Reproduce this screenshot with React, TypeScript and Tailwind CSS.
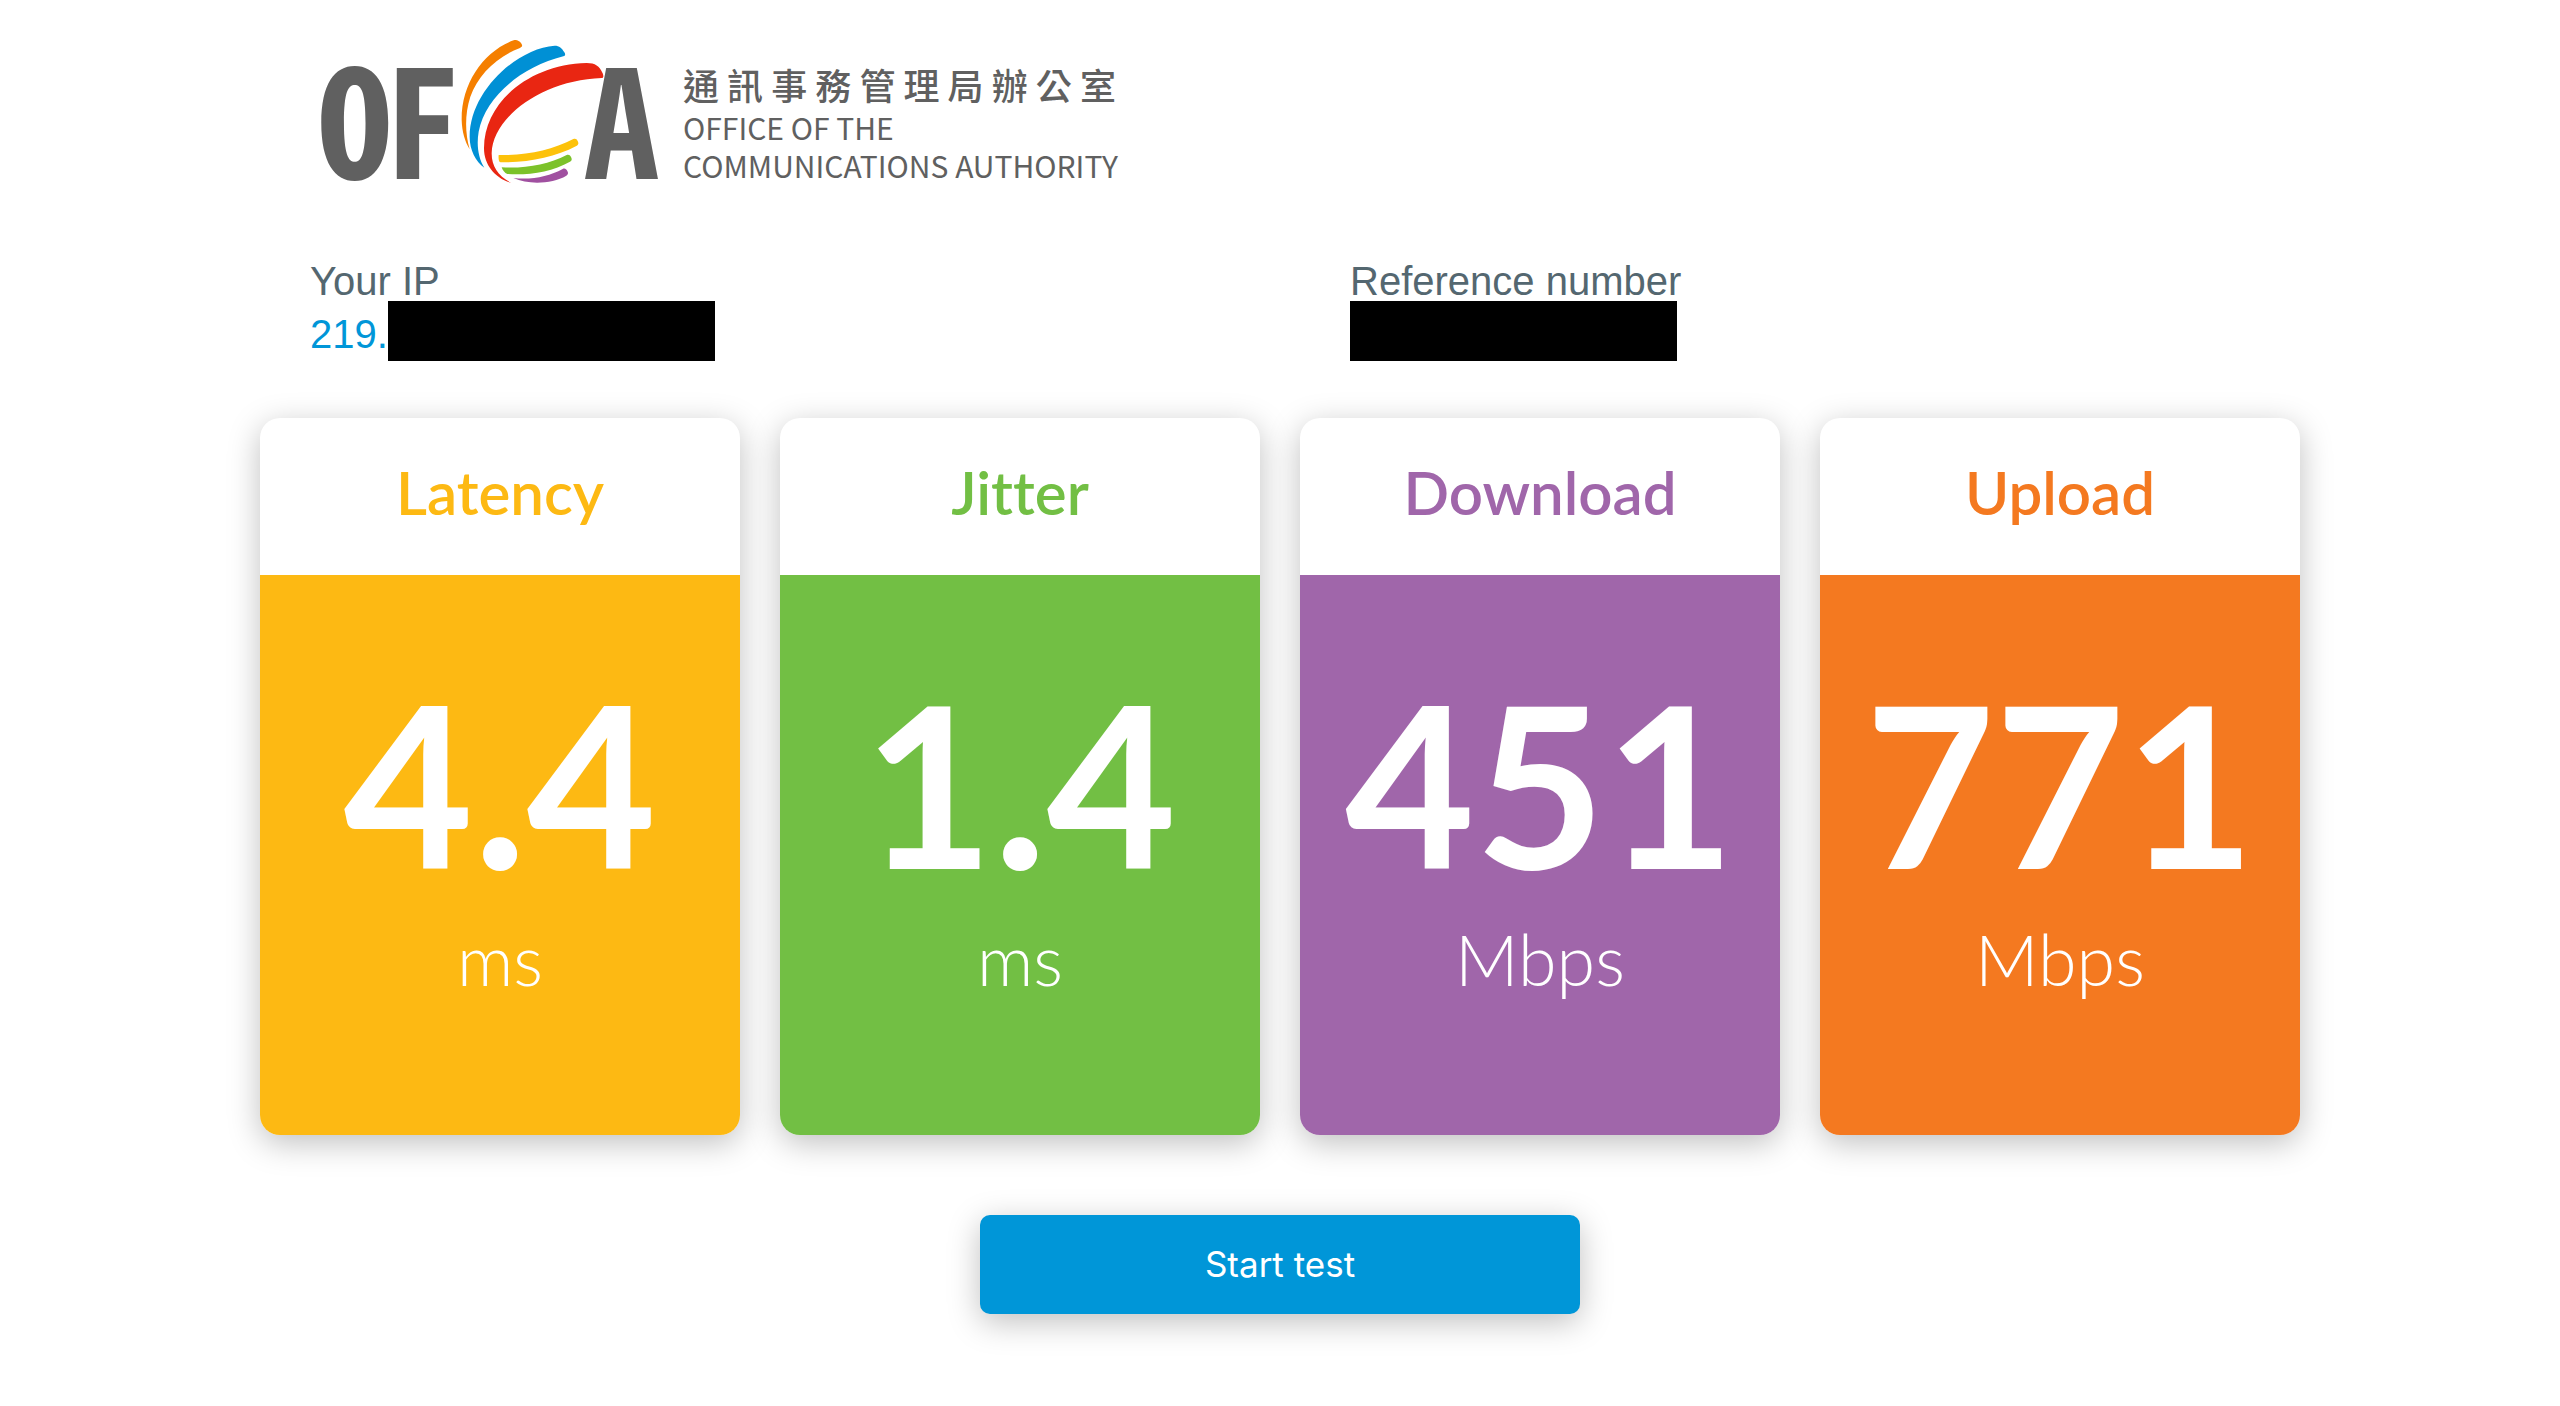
const results = [
  { title: "Latency", value: "4.4", unit: "ms", text: "text-[#fdb913]", bg: "bg-[#fdb913]" },
  { title: "Jitter", value: "1.4", unit: "ms", text: "text-[#72bf44]", bg: "bg-[#72bf44]" },
  { title: "Download", value: "451", unit: "Mbps", text: "text-[#a066aa]", bg: "bg-[#a066aa]" },
  { title: "Upload", value: "771", unit: "Mbps", text: "text-[#f47920]", bg: "bg-[#f47920]" },
];

function LogoMark() {
  return (
    <svg
      viewBox="57 48 1026 450"
      className="h-[150px] w-[342px] shrink-0 overflow-visible"
      role="img"
      aria-label="OFCA"
    >
      <g
        fill="#606060"
        fontFamily="'Noto Sans Mono CJK TC', 'Liberation Sans Narrow', sans-serif"
        fontSize="450"
        fontWeight="700"
      >
        <text x="52" y="477">O</text>
        <text x="256" y="477">F</text>
        <text x="852" y="477">A</text>
      </g>
      <path fill="#f57f00" d="M641 61C551 94 484 190 485 300C486 335 495 365 509 388C495 340 494 282 511 230C534 165 590 110 660 84C668 80 668 76 663 69C658 63 650 58 641 61Z" />
      <path fill="#0090d5" d="M764 77C650 85 509 215 509 350C509 390 527 425 553 443C535 415 529 375 536 335C556 230 665 140 790 109C796 107 797 103 793 97C786 84 778 77 764 77Z" />
      <path fill="#e92612" d="M860 129C690 133 552 245 552 385C552 435 585 475 634 489C595 469 575 440 575 400C577 290 730 180 905 174C911 174 911 168 908 160C898 138 886 129 860 129Z" />
      <path fill="#fdc20a" d="M596 405C680 406 755 391 820 357C827 355 830 357 833 363C837 370 835 375 829 378C764 412 683 428 602 427C596 427 595 415 596 405Z" />
      <path fill="#7cc22a" d="M605 442C675 446 744 434 800 405C806 403 810 405 813 411C817 418 815 422 810 425C755 456 686 466 622 462C614 459 608 451 605 442Z" />
      <path fill="#a050a0" d="M640 474C695 480 746 470 788 447C794 444 799 447 802 453C806 460 804 464 799 467C756 492 686 495 640 474Z" />
    </svg>
  );
}

function Redacted() {
  return <span className="block h-[60px] w-[327px] bg-black" />;
}

function ResultCard({ title, value, unit, text, bg }: (typeof results)[number]) {
  return (
    <section className="overflow-hidden rounded-[20px] bg-white text-center font-['Lato',sans-serif] shadow-[0_8px_32px_rgba(0,0,0,0.25)]">
      <h2
        className={`h-[157px] pt-[38px] text-[60px] leading-[72px] font-semibold [font-variant-ligatures:none] ${text}`}
      >
        {title}
      </h2>
      <div className={`h-[560px] pt-[76px] text-white ${bg}`}>
        <p className="text-[224px] leading-[264px] font-bold">{value}</p>
        <p className="pt-1 text-[70px] leading-[80px] font-light">{unit}</p>
      </div>
    </section>
  );
}

export default function App() {
  return (
    <div className="min-h-screen bg-white px-5 pt-9 pb-[92px] font-['Liberation_Sans',Arial,sans-serif]">
      <div className="mx-auto max-w-[2040px]">
        <header className="flex items-start pl-[59px]">
          <LogoMark />
          <div className="pt-[26px] pl-[22px] font-['Noto_Sans_CJK_TC',sans-serif] text-[#606060]">
            <p className="text-[36px] leading-[44px] font-medium">通 訊 事 務 管 理 局 辦 公 室</p>
            <p className="pt-0.5 text-[30px] leading-[38px]">
              OFFICE OF THE
              <br />
              COMMUNICATIONS AUTHORITY
            </p>
          </div>
        </header>

        <dl className="mt-[69px] grid grid-cols-2 text-[40px] leading-[53px]">
          <div className="pl-[50px]">
            <dt className="text-[#546770]">Your IP</dt>
            <dd className="flex h-[53px] items-end text-[#0096d8]">
              <span>219.</span>
              <Redacted />
            </dd>
          </div>
          <div className="pl-[70px]">
            <dt className="text-[#546770]">Reference number</dt>
            <dd className="flex h-[53px] items-end">
              <Redacted />
            </dd>
          </div>
        </dl>

        <main className="mt-[57px] grid grid-cols-4 gap-10">
          {results.map((result) => (
            <ResultCard key={result.title} {...result} />
          ))}
        </main>

        <div className="mt-20 flex justify-center">
          <button
            type="button"
            className="h-[99px] w-[600px] rounded-[10px] bg-[#0096d8] font-['Inter',sans-serif] text-[35px] text-white shadow-[0_8px_32px_rgba(0,0,0,0.25)]"
          >
            Start test
          </button>
        </div>
      </div>
    </div>
  );
}
